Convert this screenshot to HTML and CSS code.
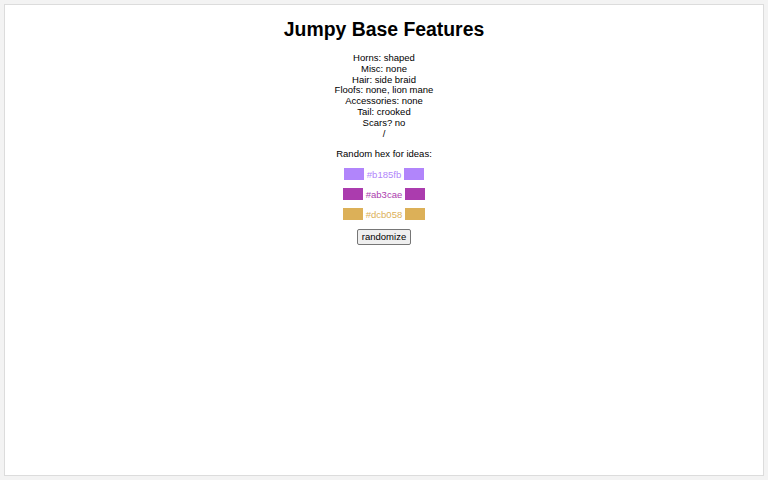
FILE: index.html
```html
<!DOCTYPE html>
<html>
<head>
<meta charset="utf-8">
<link rel="stylesheet" href="styles.css">
</head>
<body>
<div class="card">
  <h1 class="title">Jumpy Base Features</h1>
  <div class="traits">
    <div>Horns: shaped</div>
    <div>Misc: none</div>
    <div>Hair: side braid</div>
    <div>Floofs: none, lion mane</div>
    <div>Accessories: none</div>
    <div>Tail: crooked</div>
    <div>Scars? no</div>
    <div>/</div>
  </div>
  <div class="hex-label">Random hex for ideas:</div>
  <div class="hex-row"><span class="sw sw1"></span><span class="hex hex1">#b185fb</span><span class="sw sw1"></span></div>
  <div class="hex-row"><span class="sw sw2"></span><span class="hex hex2">#ab3cae</span><span class="sw sw2"></span></div>
  <div class="hex-row"><span class="sw sw3"></span><span class="hex hex3">#dcb058</span><span class="sw sw3"></span></div>
  <div class="btn-row"><button class="btn">randomize</button></div>
</div>
</body>
</html>
```
FILE: styles.css
```css
html, body { margin: 0; padding: 0; }
body {
  background: #f3f3f3;
  padding: 4px;
  font-family: "Liberation Sans", Arial, sans-serif;
  color: #000;
}
.card {
  background: #fff;
  border: 1px solid #dcdcdc;
  box-sizing: border-box;
  height: 472px;
  text-align: center;
  padding-top: 12px;
}
.title {
  margin: 0 0 12px 0;
  font-size: 19.4px;
  font-weight: bold;
  line-height: 24px;
}
.traits {
  font-size: 9.5px;
  line-height: 10.8px;
}
.hex-label {
  font-size: 9.5px;
  margin-top: 9px;
  line-height: 12px;
}
.hex-row {
  display: flex;
  justify-content: center;
  align-items: center;
  gap: 2.5px;
  font-size: 9.5px;
  margin-top: 8px;
  height: 12px;
}
.sw {
  display: inline-block;
  width: 20px;
  height: 12px;
}
.sw1 { background: #b185fb; }
.sw2 { background: #ab3cae; }
.sw3 { background: #dcb058; }
.hex1 { color: #b185fb; }
.hex2 { color: #ab3cae; }
.hex3 { color: #dcb058; }
.btn-row { margin-top: 6px; }
.btn {
  font-family: "Liberation Sans", Arial, sans-serif;
  font-size: 9.5px;
  line-height: 11px;
  padding: 1px 4px 2px;
  background: #efefef;
  border: 1px solid #767676;
  border-radius: 2px;
  color: #000;
}
```
